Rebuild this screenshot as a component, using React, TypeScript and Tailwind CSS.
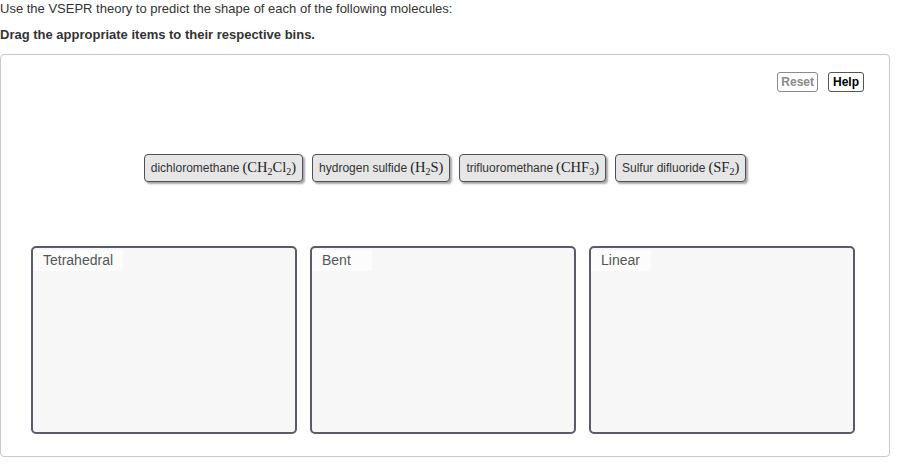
import React from "react";

type Part = { t: string; sub?: boolean };

const ITEMS: { label: string; formula: Part[] }[] = [
  { label: "dichloromethane", formula: [{ t: "CH" }, { t: "2", sub: true }, { t: "Cl" }, { t: "2", sub: true }] },
  { label: "hydrogen sulfide", formula: [{ t: "H" }, { t: "2", sub: true }, { t: "S" }] },
  { label: "trifluoromethane", formula: [{ t: "CHF" }, { t: "3", sub: true }] },
  { label: "Sulfur difluoride", formula: [{ t: "SF" }, { t: "2", sub: true }] },
];

const BINS = ["Tetrahedral", "Bent", "Linear"];

function Formula({ parts }: { parts: Part[] }) {
  return (
    <span className="font-['Liberation_Serif','DejaVu_Serif',serif] text-[14.5px] text-[#222]">
      (
      {parts.map((p, i) =>
        p.sub ? (
          <sub key={i} className="text-[10px] bottom-[-3px]">
            {p.t}
          </sub>
        ) : (
          <span key={i}>{p.t}</span>
        )
      )}
      )
    </span>
  );
}

export default function App() {
  return (
    <div className="w-[898px] h-[464px] bg-white font-['Liberation_Sans',Arial,sans-serif] text-[#333] overflow-hidden">
      <p className="text-[13px] leading-[18px]">
        Use the VSEPR theory to predict the shape of each of the following molecules:
      </p>
      <p className="text-[13px] leading-[18px] font-bold mt-[8px]">
        Drag the appropriate items to their respective bins.
      </p>

      <div className="mt-[10px] w-[890px] h-[403px] border border-[#c8c8c8] rounded-[4px] flex flex-col">
        {/* toolbar */}
        <div className="flex justify-end gap-[10px] pr-[25px] pt-[17px]">
          <button className="h-[20px] px-[3px] border border-[#8a8a8a] rounded-[3px] bg-white text-[12px] font-bold text-[#8a8a8a] leading-none">
            Reset
          </button>
          <button className="h-[20px] px-[4px] border border-[#555] rounded-[3px] bg-white text-[12px] font-bold text-black leading-none">
            Help
          </button>
        </div>

        {/* items */}
        <div className="flex justify-center gap-[9px] mt-[62px]">
          {ITEMS.map((it) => (
            <div
              key={it.label}
              className="h-[28px] px-[6px] flex items-center gap-[3px] rounded-[4px] border-[1.5px] border-[#4f4f5a] bg-[#e6e6e6] shadow-[2px_2px_2px_rgba(0,0,0,0.35)] text-[12px] text-[#333] whitespace-nowrap"
            >
              <span>{it.label}</span>
              <Formula parts={it.formula} />
            </div>
          ))}
        </div>

        {/* bins */}
        <div className="flex gap-[13px] pl-[30px] mt-[64px]">
          {BINS.map((b) => (
            <div
              key={b}
              className="w-[266px] h-[188px] rounded-[5px] border-2 border-[#5b5b6a] bg-[#f7f7f7]"
            >
              <div className="inline-block bg-[#fcfcfc] pl-[10px] pr-[10px] h-[21px] leading-[21px] text-[14px] text-[#555] min-w-[60px]">
                {b}
              </div>
            </div>
          ))}
        </div>
      </div>
    </div>
  );
}
